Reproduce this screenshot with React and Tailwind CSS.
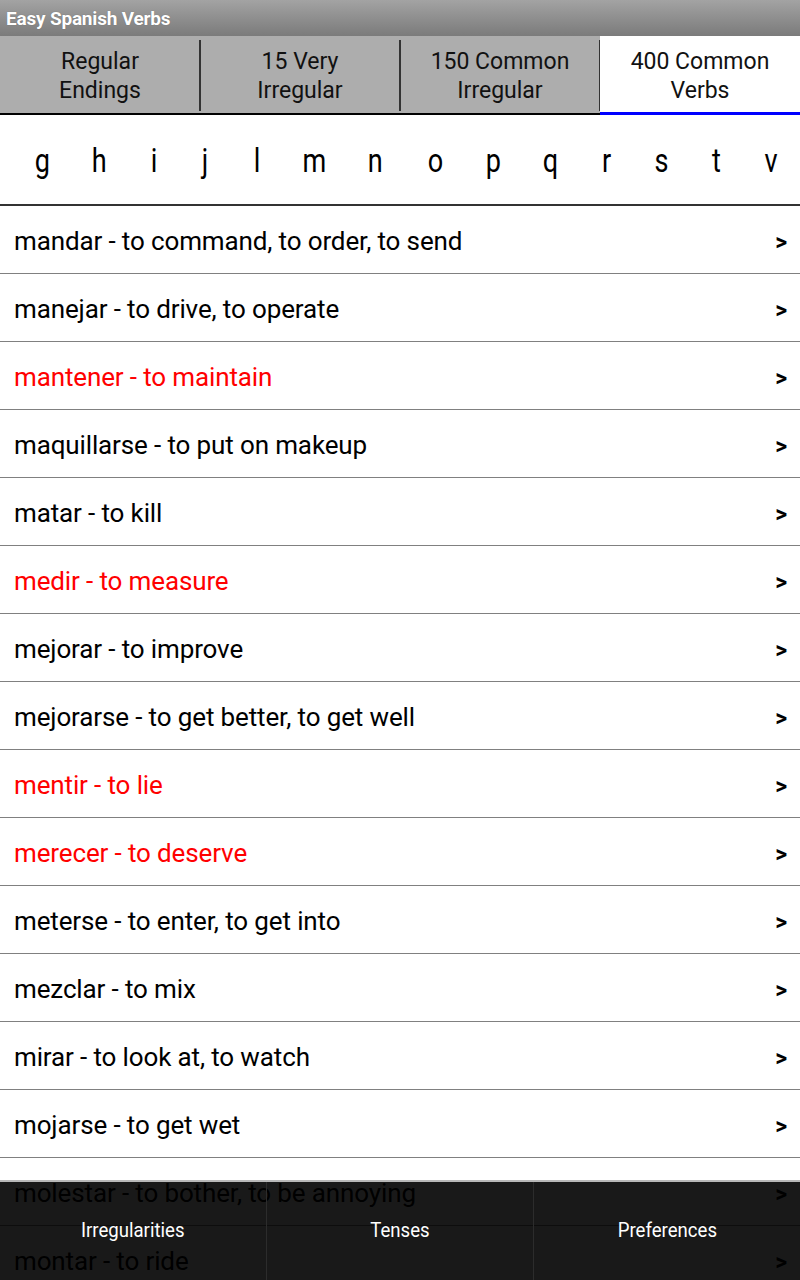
const TABS = [
  { top: "Regular", bottom: "Endings" },
  { top: "15 Very", bottom: "Irregular" },
  { top: "150 Common", bottom: "Irregular" },
  { top: "400 Common", bottom: "Verbs", active: true },
];

// letter cells, widths measured from the reference
const LETTERS = [
  { ch: "g", w: "w-[58px]" },
  { ch: "h", w: "w-[57px]" },
  { ch: "i", w: "w-[52px]" },
  { ch: "j", w: "w-[50px]" },
  { ch: "l", w: "w-[54px]" },
  { ch: "m", w: "w-[61px]" },
  { ch: "n", w: "w-[61px]" },
  { ch: "o", w: "w-[58px]" },
  { ch: "p", w: "w-[58px]" },
  { ch: "q", w: "w-[57px]" },
  { ch: "r", w: "w-[55px]" },
  { ch: "s", w: "w-[55px]" },
  { ch: "t", w: "w-[55px]" },
  { ch: "v", w: "w-[54px]" },
];

const VERBS = [
  { text: "mandar - to command, to order, to send" },
  { text: "manejar - to drive, to operate" },
  { text: "mantener - to maintain", red: true },
  { text: "maquillarse - to put on makeup" },
  { text: "matar - to kill" },
  { text: "medir - to measure", red: true },
  { text: "mejorar - to improve" },
  { text: "mejorarse - to get better, to get well" },
  { text: "mentir - to lie", red: true },
  { text: "merecer - to deserve", red: true },
  { text: "meterse - to enter, to get into" },
  { text: "mezclar - to mix" },
  { text: "mirar - to look at, to watch" },
  { text: "mojarse - to get wet" },
  { text: "molestar - to bother, to be annoying" },
  { text: "montar - to ride" },
  { text: "morir - to die", red: true },
];

const BOTTOM = ["Irregularities", "Tenses", "Preferences"];

export default function App() {
  return (
    <div
      className="relative h-[1280px] w-[800px] overflow-hidden bg-white"
      style={{ fontFamily: "Roboto, 'Liberation Sans', sans-serif" }}
    >
      {/* Title bar */}
      <div className="flex h-[36px] items-center bg-gradient-to-b from-[#a3a3a3] to-[#7b7b7b] px-[6px]">
        <span className="text-[19px] font-bold leading-none tracking-[-0.2px] text-white [text-shadow:0_0_1px_rgba(0,0,0,0.3)]">
          Easy Spanish Verbs
        </span>
      </div>

      {/* Tabs */}
      <div className="flex h-[79px] bg-[#adadad]">
        {TABS.map((tab, i) => (
          <div
            key={i}
            className={`relative flex flex-1 flex-col items-center justify-center pt-[3px] text-[23px] leading-[29px] text-[#111] ${
              tab.active
                ? "border-b-[3px] border-[#0000ff] bg-white"
                : "border-b-2 border-black"
            }`}
          >
            <span>{tab.top}</span>
            <span>{tab.bottom}</span>
            {i < TABS.length - 1 && (
              <div className="absolute right-[-1px] top-[4px] bottom-[2px] w-[2px] bg-[#333]" />
            )}
          </div>
        ))}
      </div>

      {/* Letter index */}
      <div className="flex h-[91px] items-center border-b-2 border-[#333] pl-[13px] pt-[2px]">
        {LETTERS.map((l) => (
          <div key={l.ch} className={`${l.w} flex justify-center`}>
            <span className="inline-block scale-x-[0.82] text-[33px] leading-none text-black">
              {l.ch}
            </span>
          </div>
        ))}
      </div>

      {/* Verb list */}
      <div>
        {VERBS.map((v) => (
          <div
            key={v.text}
            className="flex h-[68px] items-center justify-between border-b border-[#808080] pl-[14px] pr-[13px]"
          >
            <span
              className={`pt-[2px] text-[26px] leading-none tracking-[-0.13px] ${
                v.red ? "text-[#ff0000]" : "text-black"
              }`}
            >
              {v.text}
            </span>
            <span className="pt-[6px] text-[23px] font-bold leading-none text-black">
              &gt;
            </span>
          </div>
        ))}
      </div>

      {/* Bottom action bar (overlays the list) */}
      <div className="absolute bottom-0 left-0 right-0 flex h-[100px] border-t-2 border-[#b8b8b8] bg-black/90">
        {BOTTOM.map((label, i) => (
          <div
            key={label}
            className={`flex flex-1 items-center justify-center pb-[2px] ${
              i > 0 ? "border-l border-[#2c2c2c]" : ""
            }`}
          >
            <span className="inline-block scale-x-[0.93] text-[20px] leading-none text-white">
              {label}
            </span>
          </div>
        ))}
      </div>
    </div>
  );
}
